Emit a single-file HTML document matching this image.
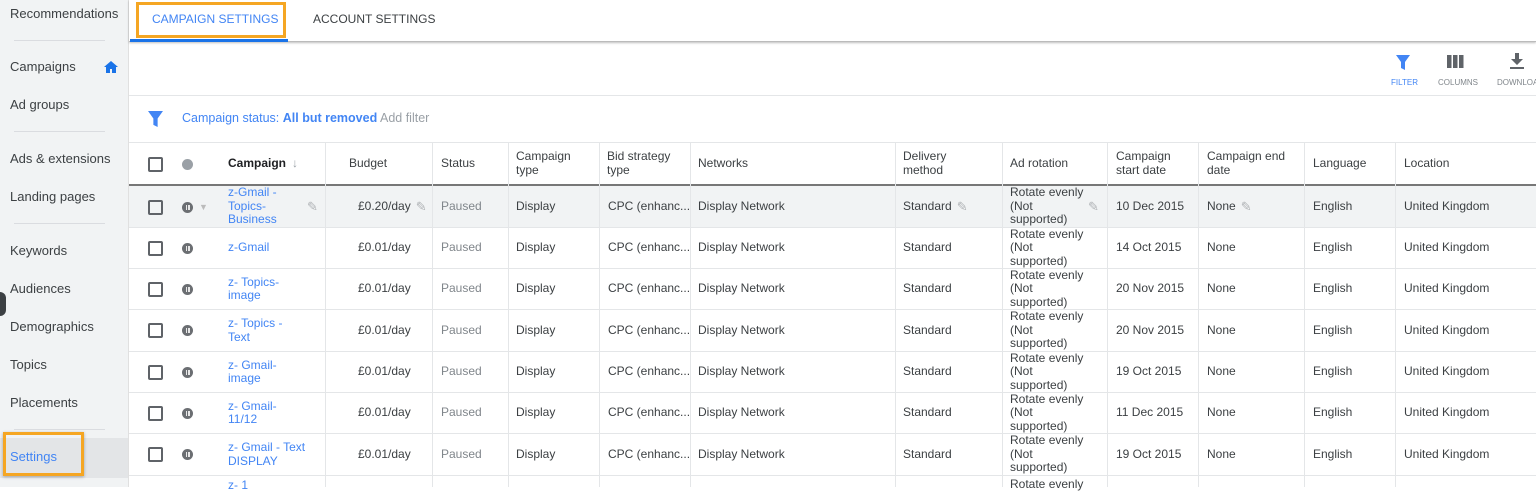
<!DOCTYPE html>
<html><head><meta charset="utf-8"><style>
*{margin:0;padding:0;box-sizing:border-box}
body{width:1536px;height:487px;overflow:hidden;position:relative;background:#fff;font-family:"Liberation Sans",Arial,sans-serif;font-size:12px;color:#3c4043}
.a{position:absolute}
#side{left:0;top:0;width:129px;height:487px;background:#f1f3f4;border-right:1px solid #e0e0e0}
.si{position:absolute;left:10px;font-size:13px;color:#3c4043}
.sep{position:absolute;left:14px;width:91px;height:1px;background:#dadce0}
.vl{position:absolute;top:142px;bottom:0;width:1px;background:#e4e6e8}
.row{position:absolute;left:129px;right:0;border-bottom:1px solid #e4e6e8}
.c{position:absolute;top:0;height:100%;display:flex;align-items:center;line-height:13.5px}
.cb{position:absolute;left:19px;width:15px;height:15px;border:2px solid #5f6368;border-radius:2px}
.dot{position:absolute;left:53px;width:11px;height:11px;border-radius:50%;background:#6b6e72}
.dot:before,.dot:after{content:"";position:absolute;top:3px;width:1.5px;height:5px;background:#e8e8e8}
.dot:before{left:3.5px}.dot:after{left:6px}
.lnk{color:#4285f4}
.gr{color:#80868b}
.pen{color:#b0b3b6;font-size:13px}
</style></head><body>
<div id="side" class="a">
<div class="si" style="top:6px">Recommendations</div>
<div class="sep" style="top:40px"></div>
<div class="si" style="top:59px">Campaigns</div>
<svg class="a" style="left:104px;top:61px" width="14" height="12" viewBox="0 0 14 12"><path d="M7 0L0 6h2v6h4V8h2v4h4V6h2z" fill="#1a73e8"/></svg>
<div class="si" style="top:97px">Ad groups</div>
<div class="sep" style="top:131px"></div>
<div class="si" style="top:151px">Ads &amp; extensions</div>
<div class="si" style="top:189px">Landing pages</div>
<div class="sep" style="top:223px"></div>
<div class="si" style="top:243px">Keywords</div>
<div class="si" style="top:281px">Audiences</div>
<div class="si" style="top:319px">Demographics</div>
<div class="si" style="top:357px">Topics</div>
<div class="si" style="top:395px">Placements</div>
<div class="sep" style="top:429px"></div>
<div class="a" style="left:0;top:438px;width:128px;height:40px;background:#e3e5e7"></div>
<div class="a" style="left:3px;top:432px;width:81px;height:44px;border:3px solid #f5a623;box-shadow:0 1px 3px rgba(0,0,0,.3)"></div>
<div class="si" style="top:449px;color:#4285f4">Settings</div>
</div>
<div class="a" style="left:-6px;top:292px;width:12px;height:24px;border-radius:6px;background:#3c4043"></div>
<div class="a" style="left:129px;top:0;right:0;height:42px;border-bottom:1px solid #bbb;box-shadow:0 1px 2px rgba(0,0,0,.25)"></div>
<div class="a" style="left:130px;top:39px;width:158px;height:3px;background:#1a73e8"></div>
<div class="a" style="left:136px;top:2px;width:150px;height:36px;border:3px solid #f5a623"></div>
<div class="a" style="left:152px;top:12px;color:#4285f4;font-size:12px">CAMPAIGN SETTINGS</div>
<div class="a" style="left:313px;top:12px;color:#3c4043;font-size:12px">ACCOUNT SETTINGS</div>
<svg class="a" style="left:1396px;top:55px" width="14" height="15" viewBox="0 0 14 15"><path d="M0 0h14L9 7v8l-4-2V7z" fill="#4285f4"/></svg>
<div class="a" style="left:1391px;top:78px;font-size:8px;color:#4285f4">FILTER</div>
<svg class="a" style="left:1447px;top:55px" width="17" height="13"><rect x="0" y="0" width="4.5" height="13" fill="#5f6368"/><rect x="6" y="0" width="4.5" height="13" fill="#5f6368"/><rect x="12" y="0" width="4.5" height="13" fill="#5f6368"/></svg>
<div class="a" style="left:1438px;top:78px;font-size:8px;color:#80868b">COLUMNS</div>
<svg class="a" style="left:1510px;top:53px" width="14" height="16"><path d="M5 0h4v6h4L7 12 1 6h4z M0 14h14v2H0z" fill="#5f6368"/></svg>
<div class="a" style="left:1497px;top:78px;font-size:8px;color:#80868b">DOWNLOAD</div>
<div class="a" style="left:129px;top:95px;right:0;height:1px;background:#e4e6e8"></div>
<svg class="a" style="left:148px;top:111px" width="15" height="16" viewBox="0 0 14 15"><path d="M0 0h14L9 7v8l-4-2V7z" fill="#4285f4"/></svg>
<div class="a" style="left:182px;top:111px;color:#4285f4;font-size:12.5px">Campaign status: <b>All but removed</b></div>
<div class="a" style="left:380px;top:111px;color:#9aa0a6;font-size:12.5px">Add filter</div>
<div class="row" style="top:142px;height:44px;border-top:1px solid #e4e6e8;border-bottom:2px solid #777">
<div class="cb" style="top:14px"></div>
<div class="a" style="left:53px;top:16px;width:11px;height:11px;border-radius:50%;background:#9aa0a6"></div>
<div class="c" style="left:99px;font-weight:bold;color:#202124">Campaign <span style="color:#9aa0a6;font-weight:normal;margin-left:6px">↓</span></div>
<div class="c" style="left:220px">Budget</div>
<div class="c" style="left:312px">Status</div>
<div class="c" style="left:387px">Campaign<br>type</div>
<div class="c" style="left:478px">Bid strategy<br>type</div>
<div class="c" style="left:569px">Networks</div>
<div class="c" style="left:774px">Delivery<br>method</div>
<div class="c" style="left:881px">Ad rotation</div>
<div class="c" style="left:987px">Campaign<br>start date</div>
<div class="c" style="left:1078px">Campaign end<br>date</div>
<div class="c" style="left:1184px">Language</div>
<div class="c" style="left:1275px">Location</div>
</div>
<div class="a" style="left:129px;top:186px;right:0;height:42px;background:#f1f3f4"></div>
<div class="vl" style="left:325px"></div><div class="vl" style="left:432px"></div><div class="vl" style="left:508px"></div><div class="vl" style="left:599px"></div><div class="vl" style="left:690px"></div><div class="vl" style="left:895px"></div><div class="vl" style="left:1002px"></div><div class="vl" style="left:1107px"></div><div class="vl" style="left:1198px"></div><div class="vl" style="left:1304px"></div><div class="vl" style="left:1395px"></div>
<div class="row" style="top:186px;height:42px">
<div class="cb" style="top:14px"></div><div class="dot" style="top:16px"></div><div class="a" style="left:70px;top:16px;color:#bbb;font-size:9px">▼</div>
<div class="c lnk" style="left:99px">z-Gmail -<br>Topics-<br>Business</div><div class="c pen" style="left:178px">✎</div>
<div class="c" style="left:229px">£0.20/day <span class="pen" style="margin-left:5px">✎</span></div>
<div class="c gr" style="left:312px">Paused</div><div class="c" style="left:387px">Display</div><div class="c" style="left:479px">CPC (enhanc...</div><div class="c" style="left:569px">Display Network</div>
<div class="c" style="left:774px">Standard <span class="pen" style="margin-left:5px">✎</span></div><div class="c" style="left:881px">Rotate evenly<br>(Not<br>supported)</div><div class="c pen" style="left:959px">✎</div>
<div class="c" style="left:987px">10 Dec 2015</div><div class="c" style="left:1078px">None <span class="pen" style="margin-left:5px">✎</span></div><div class="c" style="left:1184px">English</div><div class="c" style="left:1275px">United Kingdom</div>
</div>
<div class="row" style="top:228px;height:41px">
<div class="cb" style="top:13px"></div><div class="dot" style="top:15px"></div>
<div class="c lnk" style="left:99px">z-Gmail</div>
<div class="c" style="left:229px">£0.01/day</div>
<div class="c gr" style="left:312px">Paused</div><div class="c" style="left:387px">Display</div><div class="c" style="left:479px">CPC (enhanc...</div><div class="c" style="left:569px">Display Network</div>
<div class="c" style="left:774px">Standard</div><div class="c" style="left:881px">Rotate evenly<br>(Not<br>supported)</div>
<div class="c" style="left:987px">14 Oct 2015</div><div class="c" style="left:1078px">None</div><div class="c" style="left:1184px">English</div><div class="c" style="left:1275px">United Kingdom</div>
</div>
<div class="row" style="top:269px;height:41px">
<div class="cb" style="top:13px"></div><div class="dot" style="top:15px"></div>
<div class="c lnk" style="left:99px">z- Topics-<br>image</div>
<div class="c" style="left:229px">£0.01/day</div>
<div class="c gr" style="left:312px">Paused</div><div class="c" style="left:387px">Display</div><div class="c" style="left:479px">CPC (enhanc...</div><div class="c" style="left:569px">Display Network</div>
<div class="c" style="left:774px">Standard</div><div class="c" style="left:881px">Rotate evenly<br>(Not<br>supported)</div>
<div class="c" style="left:987px">20 Nov 2015</div><div class="c" style="left:1078px">None</div><div class="c" style="left:1184px">English</div><div class="c" style="left:1275px">United Kingdom</div>
</div>
<div class="row" style="top:310px;height:42px">
<div class="cb" style="top:13px"></div><div class="dot" style="top:15px"></div>
<div class="c lnk" style="left:99px">z- Topics -<br>Text</div>
<div class="c" style="left:229px">£0.01/day</div>
<div class="c gr" style="left:312px">Paused</div><div class="c" style="left:387px">Display</div><div class="c" style="left:479px">CPC (enhanc...</div><div class="c" style="left:569px">Display Network</div>
<div class="c" style="left:774px">Standard</div><div class="c" style="left:881px">Rotate evenly<br>(Not<br>supported)</div>
<div class="c" style="left:987px">20 Nov 2015</div><div class="c" style="left:1078px">None</div><div class="c" style="left:1184px">English</div><div class="c" style="left:1275px">United Kingdom</div>
</div>
<div class="row" style="top:352px;height:41px">
<div class="cb" style="top:13px"></div><div class="dot" style="top:15px"></div>
<div class="c lnk" style="left:99px">z- Gmail-<br>image</div>
<div class="c" style="left:229px">£0.01/day</div>
<div class="c gr" style="left:312px">Paused</div><div class="c" style="left:387px">Display</div><div class="c" style="left:479px">CPC (enhanc...</div><div class="c" style="left:569px">Display Network</div>
<div class="c" style="left:774px">Standard</div><div class="c" style="left:881px">Rotate evenly<br>(Not<br>supported)</div>
<div class="c" style="left:987px">19 Oct 2015</div><div class="c" style="left:1078px">None</div><div class="c" style="left:1184px">English</div><div class="c" style="left:1275px">United Kingdom</div>
</div>
<div class="row" style="top:393px;height:41px">
<div class="cb" style="top:13px"></div><div class="dot" style="top:15px"></div>
<div class="c lnk" style="left:99px">z- Gmail-<br>11/12</div>
<div class="c" style="left:229px">£0.01/day</div>
<div class="c gr" style="left:312px">Paused</div><div class="c" style="left:387px">Display</div><div class="c" style="left:479px">CPC (enhanc...</div><div class="c" style="left:569px">Display Network</div>
<div class="c" style="left:774px">Standard</div><div class="c" style="left:881px">Rotate evenly<br>(Not<br>supported)</div>
<div class="c" style="left:987px">11 Dec 2015</div><div class="c" style="left:1078px">None</div><div class="c" style="left:1184px">English</div><div class="c" style="left:1275px">United Kingdom</div>
</div>
<div class="row" style="top:434px;height:42px">
<div class="cb" style="top:13px"></div><div class="dot" style="top:15px"></div>
<div class="c lnk" style="left:99px">z- Gmail - Text<br>DISPLAY</div>
<div class="c" style="left:229px">£0.01/day</div>
<div class="c gr" style="left:312px">Paused</div><div class="c" style="left:387px">Display</div><div class="c" style="left:479px">CPC (enhanc...</div><div class="c" style="left:569px">Display Network</div>
<div class="c" style="left:774px">Standard</div><div class="c" style="left:881px">Rotate evenly<br>(Not<br>supported)</div>
<div class="c" style="left:987px">19 Oct 2015</div><div class="c" style="left:1078px">None</div><div class="c" style="left:1184px">English</div><div class="c" style="left:1275px">United Kingdom</div>
</div>
<div class="a lnk" style="left:228px;top:478px">z- 1</div>
<div class="a" style="left:1010px;top:477px">Rotate evenly</div>
</body></html>
